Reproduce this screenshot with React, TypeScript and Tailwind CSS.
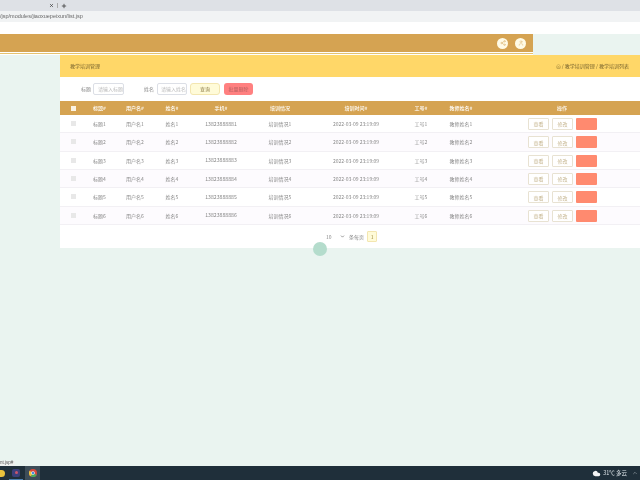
import { Share2, User, Home, ChevronDown, ChevronUp, Plus, X, Cloud } from "lucide-react";

const rows = [1, 2, 3, 4, 5, 6];
const grid = "grid grid-cols-[26px_27px_44px_30px_68px_50px_102px_28px_52px_150px] items-center text-center whitespace-nowrap";

export default function App() {
  return (
    <div className="w-[640px] h-[480px] overflow-hidden flex flex-col bg-[#eaf4f0] text-[5px] text-[#888] blur-[0.35px] font-['Noto_Sans_CJK_SC','Noto_Sans',sans-serif]">
      {/* browser chrome */}
      <div className="h-[11px] bg-[#dee1e6] flex items-center pl-[49px] gap-[3px] text-[#333]">
        <X size={5} strokeWidth={3} />
        <div className="w-px h-[5px] bg-[#aaa]" />
        <Plus size={6} strokeWidth={3} />
      </div>
      <div className="h-[11px] bg-[#f1f3f4] flex items-center text-[#666] text-[5.5px] font-['Liberation_Sans',sans-serif]">
        /jsp/modules/jiaoxuepeixun/list.jsp
      </div>
      <div className="h-[12px] bg-white" />

      {/* site header */}
      <div className="w-[533px] bg-white">
        <div className="h-[18px] bg-[#d5a352] flex items-center justify-end gap-[7px] pr-[7px]">
          <div className="w-[11px] h-[11px] rounded-full bg-[#fffbe6] flex items-center justify-center">
            <Share2 size={6} strokeWidth={1.5} className="text-[#d5a352]" />
          </div>
          <div className="w-[11px] h-[11px] rounded-full bg-[#fffbe6] flex items-center justify-center">
            <User size={6} strokeWidth={1.5} className="text-[#d5a352]" />
          </div>
        </div>
        <div className="h-[1px] bg-white" />
        <div className="h-[1px] bg-[#e6c370]" />
        <div className="h-[1px] bg-white" />
      </div>

      {/* panel */}
      <div className="ml-[60px] w-[580px] bg-white relative">
        <div className="h-[22px] bg-[#ffd768] flex items-center justify-between pl-[10px] pr-[11px] text-[#7a6630]">
          <span>教学培训管理</span>
          <span className="flex items-center gap-[1px]">
            <Home size={5} strokeWidth={1.5} />
            <span>/ 教学培训管理 / 教学培训列表</span>
          </span>
        </div>

        <div className="h-[24px] flex items-center pl-[21px] whitespace-nowrap">
          <span className="w-[12px]">标题</span>
          <div className="w-[31px] h-[12px] border border-[#dcdfe6] rounded-[2px] flex items-center pl-[4px] text-[#bbb]">请输入标题</div>
          <span className="ml-[20px] w-[13px]">姓名</span>
          <div className="w-[30px] h-[12px] border border-[#dcdfe6] rounded-[2px] flex items-center pl-[3px] text-[#bbb]">请输入姓名</div>
          <div className="ml-[3px] w-[30px] h-[12px] bg-[#fffbd8] border border-[#f3e6b0] rounded-[3px] flex items-center justify-center text-[#8a7a45]">查询</div>
          <div className="ml-[4px] w-[29px] h-[12px] bg-[#ff8080] rounded-[3px] flex items-center justify-center text-[#b86060]">批量删除</div>
        </div>

        <div className={`${grid} h-[14px] bg-[#d5a352] text-white font-medium`}>
          <div className="flex justify-center"><div className="w-[5px] h-[5px] bg-[#fbf3e3]" /></div>
          <span>标题#</span>
          <span>用户名#</span>
          <span>姓名#</span>
          <span>手机#</span>
          <span>培训情况</span>
          <span>培训时间#</span>
          <span>工号#</span>
          <span>教师姓名#</span>
          <span>操作</span>
        </div>

        {rows.map((n) => (
          <div key={n} className={`${grid} h-[18.33px] border-b border-[#f2f0f4] ${n % 2 === 0 ? "bg-[#fdfbfe]" : "bg-white"}`}>
            <div className="flex justify-center"><div className="w-[5px] h-[5px] bg-[#e8e8e8]" /></div>
            <span>标题{n}</span>
            <span>用户名{n}</span>
            <span>姓名{n}</span>
            <span className="text-[5.2px]">1382388888{n}</span>
            <span>培训情况{n}</span>
            <span className="text-[5px]">2022-03-09 23:19:09</span>
            <span>工号{n}</span>
            <span>教师姓名{n}</span>
            <div className="flex justify-start gap-[3px] pl-[41px] pt-[1px]">
              <div className="w-[21px] h-[12px] border border-[#e8e2d2] rounded-[1px] bg-white flex items-center justify-center text-[#c4b38c]">查看</div>
              <div className="w-[21px] h-[12px] border border-[#e8e2d2] rounded-[1px] bg-white flex items-center justify-center text-[#c4b38c]">修改</div>
              <div className="w-[21px] h-[12px] rounded-[1px] bg-[#ff8a6f]" />
            </div>
          </div>
        ))}

        <div className="h-[23px] flex items-center pl-[265px] whitespace-nowrap">
          <div className="w-[21px] h-[10px] bg-white flex items-center justify-between px-[1px]">
            <span>10</span>
            <ChevronDown size={5} strokeWidth={2.5} className="text-[#444]" />
          </div>
          <span className="ml-[3px]">条每页</span>
          <div className="ml-[3px] w-[10px] h-[11px] bg-[#fffbd8] border border-[#f3e6b0] rounded-[1px] flex items-center justify-center text-[#a08a40]">1</div>
        </div>

        {/* cursor highlight */}
        <div className="absolute left-[253px] top-[187px] w-[14px] h-[14px] rounded-full bg-[#b4dccc]" />
      </div>

      <div className="flex-1 flex items-end">
        <div className="h-[5px] w-[15px] bg-[#eef0ee] text-[#555] text-[4.5px] flex items-center font-['Liberation_Sans',sans-serif]">nt.jsp#</div>
      </div>

      {/* taskbar */}
      <div className="h-[14px] bg-[#1f2f3a] flex items-center justify-between text-[#dfe6ea]">
        <div className="flex items-center h-full">
          <div className="w-[5px] h-[7px] rounded-r-full bg-[#e8c23c]" />
          <div className="ml-[4px] w-[14px] h-full flex items-center justify-center border-b border-[#4a7fb0]">
            <div className="w-[8px] h-[8px] rounded-[2px] bg-[#3a3f7a] flex items-center justify-center">
              <div className="w-[3px] h-[3px] rounded-full bg-[#c9556a]" />
            </div>
          </div>
          <div className="ml-[2px] w-[15px] h-full bg-[#3d4d58] flex items-center justify-center">
            <svg width="8" height="8" viewBox="0 0 24 24">
              <circle cx="12" cy="12" r="12" fill="#d8483b" />
              <path d="M12 12 L23 18 A12 12 0 0 1 5 22 Z" fill="#4aa95a" />
              <path d="M12 12 L5 22 A12 12 0 0 1 2 5 Z" fill="#e9c53f" />
              <circle cx="12" cy="12" r="5.5" fill="#fff" />
              <circle cx="12" cy="12" r="4" fill="#4a8ee0" />
            </svg>
          </div>
        </div>
        <div className="flex items-center pr-[2px] text-[5.5px]">
          <Cloud size={9} fill="#f3f3f3" strokeWidth={0} />
          <span className="ml-[2px]">31℃ 多云</span>
          <ChevronUp size={6} strokeWidth={1.5} className="ml-[5px]" />
        </div>
      </div>
    </div>
  );
}
